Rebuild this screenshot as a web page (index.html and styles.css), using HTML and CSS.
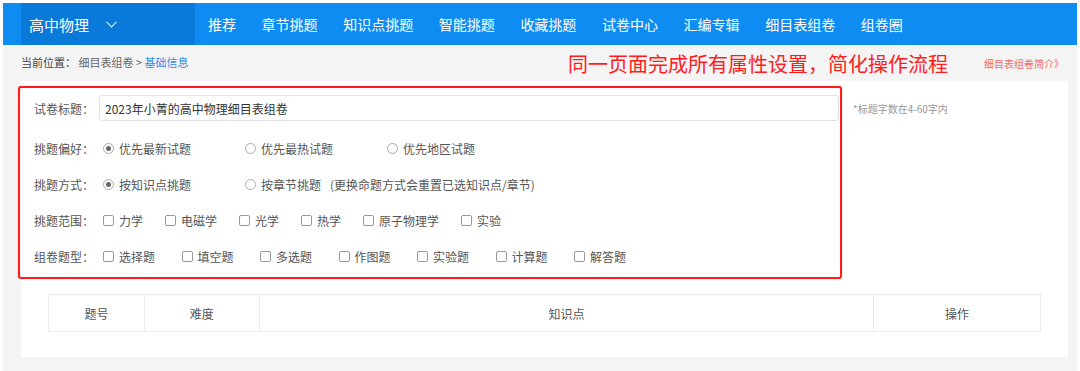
FILE: index.html
```html
<!DOCTYPE html>
<html lang="zh-CN">
<head>
    <meta charset="UTF-8">
    <meta name="viewport" content="width=device-width, initial-scale=1.0">
    <title>细目表组卷 - 基础信息</title>
    <link rel="stylesheet" href="styles.css">
</head>
<body>
    <div class="page">
        <nav class="topnav">
            <div class="subject">
                <span>高中物理</span>
                <svg class="chevron" width="11" height="7" viewBox="0 0 11 7"><polyline points="0.5,0.8 5.5,5.8 10.5,0.8" fill="none" stroke="#cfe5fb" stroke-width="1.2"/></svg>
            </div>
            <a class="nav-item">推荐</a>
            <a class="nav-item">章节挑题</a>
            <a class="nav-item">知识点挑题</a>
            <a class="nav-item">智能挑题</a>
            <a class="nav-item">收藏挑题</a>
            <a class="nav-item">试卷中心</a>
            <a class="nav-item">汇编专辑</a>
            <a class="nav-item">细目表组卷</a>
            <a class="nav-item">组卷圈</a>
        </nav>

        <div class="crumbbar">
            <div class="crumbs">
                <span class="crumb-label">当前位置：</span>
                <span>细目表组卷 &gt;</span>
                <span class="crumb-current">基础信息</span>
            </div>
            <div class="headline">同一页面完成所有属性设置，简化操作流程</div>
            <a class="intro">细目表组卷简介》</a>
        </div>

        <div class="panel">
            <div class="highlight"></div>

            <div class="form-row title-row">
                <label class="label">试卷标题：</label>
                <input class="title-input" type="text" value="2023年小菁的高中物理细目表组卷">
                <span class="hint">*标题字数在4-60字内</span>
            </div>

            <div class="form-row">
                <span class="label">挑题偏好：</span>
                <span class="radio checked"><i></i>优先最新试题</span>
                <span class="radio"><i></i>优先最热试题</span>
                <span class="radio"><i></i>优先地区试题</span>
            </div>

            <div class="form-row">
                <span class="label">挑题方式：</span>
                <span class="radio checked"><i></i>按知识点挑题</span>
                <span class="radio wide"><i></i>按章节挑题 <span class="note">(更换命题方式会重置已选知识点/章节)</span></span>
            </div>

            <div class="form-row scope">
                <span class="label">挑题范围：</span>
                <span class="check"><i></i>力学</span>
                <span class="check"><i></i>电磁学</span>
                <span class="check"><i></i>光学</span>
                <span class="check"><i></i>热学</span>
                <span class="check"><i></i>原子物理学</span>
                <span class="check"><i></i>实验</span>
            </div>

            <div class="form-row types">
                <span class="label">组卷题型：</span>
                <span class="check"><i></i>选择题</span>
                <span class="check"><i></i>填空题</span>
                <span class="check"><i></i>多选题</span>
                <span class="check"><i></i>作图题</span>
                <span class="check"><i></i>实验题</span>
                <span class="check"><i></i>计算题</span>
                <span class="check"><i></i>解答题</span>
            </div>

            <table class="grid">
                <thead>
                    <tr>
                        <th class="col-no">题号</th>
                        <th class="col-level">难度</th>
                        <th class="col-point">知识点</th>
                        <th class="col-op">操作</th>
                    </tr>
                </thead>
            </table>
        </div>
    </div>
</body>
</html>
```

FILE: styles.css
```css
:root {
    --blue: #0f8cf1;
    --blue-dark: #0a7ada;
    --text: #555;
    --line: #ececec;
    --red: #ff1c1c;
}

* {
    box-sizing: border-box;
}

body {
    margin: 0;
    background: #fff;
    font-family: "Noto Sans CJK SC", "Microsoft YaHei", sans-serif;
    color: var(--text);
}

.page {
    margin: 3px 3px 0 3px;
    background: #f4f4f4;
    height: 368px;
}

/* top navigation */
.topnav {
    display: flex;
    align-items: stretch;
    height: 42px;
    background: var(--blue);
    padding-left: 18px;
}

.subject {
    display: flex;
    align-items: center;
    width: 174px;
    padding-left: 8px;
    background: var(--blue-dark);
    color: #fff;
    font-size: 15px;
}

.chevron {
    margin-left: 17px;
}

.nav-item {
    display: flex;
    align-items: center;
    padding: 0 12.8px;
    color: #fff;
    font-size: 14px;
}

.subject + .nav-item {
    padding-left: 13px;
}

/* breadcrumb line */
.crumbbar {
    display: flex;
    align-items: center;
    height: 36px;
    padding: 0 13px 0 18px;
}

.crumbs {
    font-size: 11px;
    color: #666;
    margin-top: -2px;
}

.crumb-label {
    color: #444;
}

.crumb-current {
    color: #2f8ee8;
}

.headline {
    margin-left: auto;
    font-size: 20px;
    color: var(--red);
}

.intro {
    margin-left: 36px;
    font-size: 10px;
    color: #f06a6a;
}

/* main panel */
.panel {
    position: relative;
    margin: 0 9px 0 18px;
    height: 276px;
    background: #fff;
    padding-top: 14px;
}

.highlight {
    position: absolute;
    left: -3px;
    top: 5px;
    width: 824px;
    height: 193px;
    border: 2px solid var(--red);
    border-radius: 3px;
    box-shadow: 0 0 1px rgba(255, 0, 0, 0.6);
    pointer-events: none;
}

.form-row {
    display: flex;
    align-items: center;
    height: 36px;
    padding-left: 13px;
    font-size: 12px;
    color: var(--text);
}

.title-row {
    height: 26px;
    margin-bottom: 9px;
}

.label {
    width: 69px;
    flex: none;
}

.title-row .label {
    width: 65px;
}

.title-input {
    width: 740px;
    height: 26px;
    border: 1px solid #e2e2e2;
    border-radius: 3px;
    padding: 0 5px;
    font: inherit;
    font-size: 12px;
    color: #333;
}

.hint {
    margin-left: 14px;
    font-size: 10px;
    color: #999;
}

.radio, .check {
    display: flex;
    align-items: center;
}

.radio {
    width: 142px;
}

.radio.wide {
    width: auto;
}

.radio i {
    width: 11px;
    height: 11px;
    border: 1px solid #aaa;
    border-radius: 50%;
    margin-right: 5px;
    display: flex;
    align-items: center;
    justify-content: center;
}

.radio.checked i::after {
    content: "";
    width: 5px;
    height: 5px;
    border-radius: 50%;
    background: #666;
}

.note {
    margin-left: 9px;
}

.check i {
    width: 11px;
    height: 11px;
    border: 1px solid #999;
    border-radius: 2px;
    margin-right: 5px;
}

.scope .check {
    margin-right: 22px;
}

.types .check {
    margin-right: 26.5px;
}

/* question table */
.grid {
    margin: 20px 27px 0;
    width: 993px;
    border-collapse: collapse;
    font-size: 12px;
}

.grid th {
    height: 37px;
    border: 1px solid var(--line);
    font-weight: normal;
    color: #555;
    text-align: center;
}

.col-no { width: 96px; }
.col-level { width: 115px; }
.col-point { width: 615px; }
.col-op { width: 167px; }
```
